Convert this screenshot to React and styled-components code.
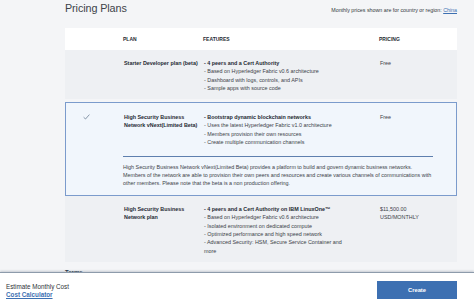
import React from 'react';
import styled, { createGlobalStyle } from 'styled-components';

const GlobalStyle = createGlobalStyle`
  html, body {
    margin: 0;
    padding: 0;
    background: #f4f5f7;
  }
  body {
    font-family: "Liberation Sans", Arial, sans-serif;
    color: #3a3f44;
  }
`;

const Page = styled.div`
  height: 306px;
  display: flex;
  flex-direction: column;
  overflow: hidden;
`;

const Main = styled.div`
  flex: 1;
  overflow: hidden;
  padding: 0 17px 0 65px;
`;

const TitleRow = styled.div`
  display: flex;
  justify-content: space-between;
  align-items: baseline;
  height: 28px;
  padding-top: 2px;
  box-sizing: border-box;
`;

const Title = styled.h1`
  margin: 0;
  font-size: 10.8px;
  font-weight: 400;
  color: #3d4349;
  letter-spacing: -0.1px;
`;

const RegionNote = styled.div`
  font-size: 5.3px;
  color: #33393e;
  a {
    color: #3d70b2;
    text-decoration: underline;
  }
`;

const Columns = styled.div`
  display: grid;
  grid-template-columns: 58px 80px 176px 1fr;
`;

const Header = styled(Columns)`
  background: #ffffff;
  height: 22px;
  align-items: center;
  font-size: 5px;
  font-weight: 700;
  text-transform: uppercase;
  color: #1f2a33;
`;

const Row = styled.div`
  background: ${p => (p.$selected ? '#f1f6fc' : '#eef0f3')};
  border: 1px solid ${p => (p.$selected ? '#7b9bcc' : 'transparent')};
  padding: ${p => (p.$selected ? '10px 0 8px' : '8px 0 6px')};
  margin-bottom: ${p => p.$gap || 0}px;
  font-size: 5.4px;
  line-height: 8.3px;
`;

const Cells = styled(Columns)`
  align-items: start;
`;

const Check = styled.div`
  padding: 1px 0 0 17px;
  svg {
    display: block;
  }
`;

const PlanName = styled.div`
  font-weight: 700;
  color: #1f2a33;
  padding-right: 4px;
`;

const Features = styled.ul`
  list-style: none;
  margin: 0;
  padding: 0 30px 0 0;
  color: #3d4349;
`;

const Feature = styled.li`
  font-weight: ${p => (p.$lead ? 700 : 400)};
  color: ${p => (p.$lead ? '#1f2a33' : '#3d4349')};
`;

const Price = styled.div`
  color: #3d4349;
`;

const Detail = styled.div`
  margin: 10px 23px 0 57px;
  border-top: 1px solid #5e7fae;
  padding-top: 7px;
  line-height: 7.6px;
  color: #3d4349;
`;

const Terms = styled.div`
  margin-top: 7px;
  font-size: 6px;
  font-weight: 700;
  color: #2c3a4a;
`;

const Footer = styled.div`
  height: 34px;
  flex-shrink: 0;
  background: #ffffff;
  border-top: 1px solid #8d9bab;
  box-shadow: 0 -1px 2px rgba(60, 80, 100, 0.25);
  display: flex;
  justify-content: space-between;
  align-items: flex-start;
  padding: 8px 17px 0 6px;
  box-sizing: border-box;
`;

const Estimate = styled.div`
  font-size: 6.3px;
  line-height: 8.3px;
  padding-top: 2px;
  color: #2d3338;
  a {
    display: block;
    color: #3d70b2;
    font-weight: 700;
    text-decoration: underline;
  }
`;

const CreateButton = styled.button`
  width: 80px;
  height: 18px;
  border: none;
  background: #3d70b2;
  color: #ffffff;
  font-family: "Liberation Sans", Arial, sans-serif;
  font-size: 5.8px;
  font-weight: 700;
  cursor: pointer;
`;

const CheckIcon = () => (
  <svg width="7" height="6" viewBox="0 0 7 6">
    <path d="M0.6 3.2 L2.5 5 L6.4 0.6" fill="none" stroke="#5a6f86" strokeWidth="0.7" />
  </svg>
);

const plans = [
  {
    name: 'Starter Developer plan (beta)',
    features: [
      '- 4 peers and a Cert Authority',
      '- Based on Hyperledger Fabric v0.6 architecture',
      '- Dashboard with logs, controls, and APIs',
      '- Sample apps with source code',
    ],
    price: ['Free'],
    gap: 3,
  },
  {
    name: 'High Security Business Network vNext(Limited Beta)',
    features: [
      '- Bootstrap dynamic blockchain networks',
      '- Uses the latest Hyperledger Fabric v1.0 architecture',
      '- Members provision their own resources',
      '- Create multiple communication channels',
    ],
    price: ['Free'],
    selected: true,
    detail:
      'High Security Business Network vNext(Limited Beta) provides a platform to build and govern dynamic business networks. Members of the network are able to provision their own peers and resources and create various channels of communications with other members. Please note that the beta is a non production offering.',
  },
  {
    name: 'High Security Business Network plan',
    features: [
      '- 4 peers and a Cert Authority on IBM LinuxOne™',
      '- Based on Hyperledger Fabric v0.6 architecture',
      '- Isolated environment on dedicated compute',
      '- Optimized performance and high speed network',
      '- Advanced Security: HSM, Secure Service Container and more',
    ],
    price: ['$11,500.00', 'USD/MONTHLY'],
  },
];

export default function App() {
  return (
    <Page>
      <GlobalStyle />
      <Main>
        <TitleRow>
          <Title>Pricing Plans</Title>
          <RegionNote>
            Monthly prices shown are for country or region: <a href="#china">China</a>
          </RegionNote>
        </TitleRow>
        <Header>
          <span />
          <span>Plan</span>
          <span>Features</span>
          <span>Pricing</span>
        </Header>
        {plans.map(plan => (
          <Row key={plan.name} $selected={plan.selected} $gap={plan.gap}>
            <Cells>
              <Check>{plan.selected && <CheckIcon />}</Check>
              <PlanName>{plan.name}</PlanName>
              <Features>
                {plan.features.map((f, i) => (
                  <Feature key={f} $lead={i === 0}>
                    {f}
                  </Feature>
                ))}
              </Features>
              <Price>
                {plan.price.map(p => (
                  <div key={p}>{p}</div>
                ))}
              </Price>
            </Cells>
            {plan.detail && <Detail>{plan.detail}</Detail>}
          </Row>
        ))}
        <Terms>Terms</Terms>
      </Main>
      <Footer>
        <Estimate>
          Estimate Monthly Cost
          <a href="#calc">Cost Calculator</a>
        </Estimate>
        <CreateButton>Create</CreateButton>
      </Footer>
    </Page>
  );
}
